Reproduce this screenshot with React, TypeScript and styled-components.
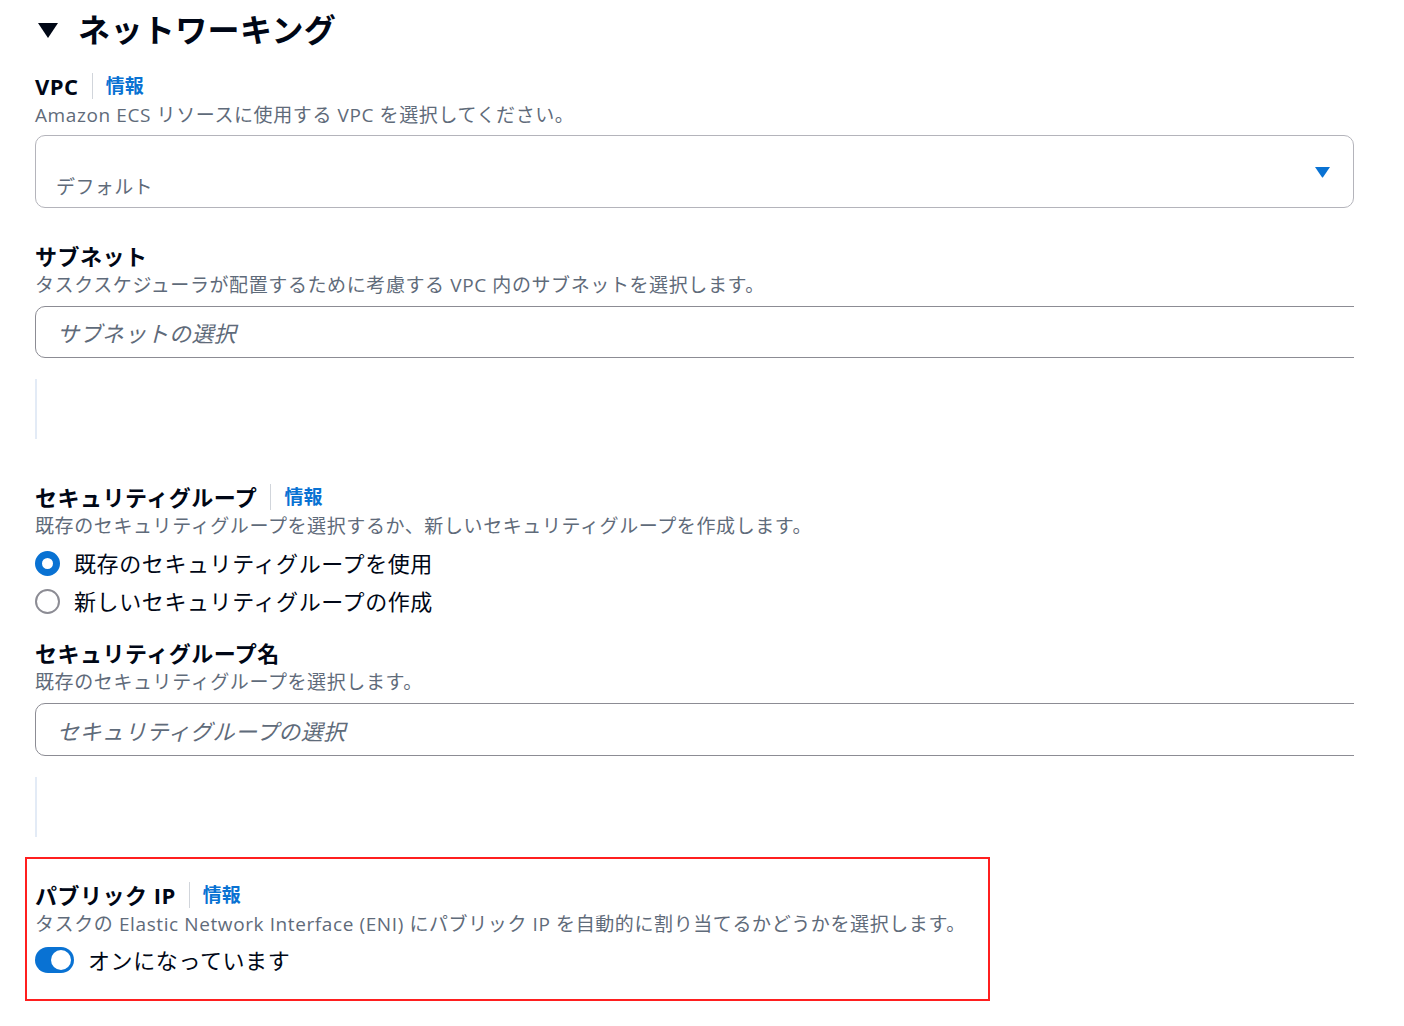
import React from 'react';
import styled, { createGlobalStyle } from 'styled-components';

const GlobalStyle = createGlobalStyle`
  body {
    margin: 0;
    background: #ffffff;
    font-family: 'Open Sans', 'Noto Sans CJK JP', sans-serif;
    color: #000716;
  }
`;

const Page = styled.div`
  padding: 10px 0 0 35px;
  width: 1319px;
`;

const Heading = styled.h2`
  display: flex;
  align-items: center;
  margin: 0;
  height: 40px;
  font-size: 32px;
  font-weight: 700;
  line-height: 40px;
  letter-spacing: 0.4px;
  svg {
    margin: 0 20px 0 3px;
  }
`;

const Field = styled.div<{ $top: number }>`
  margin-top: ${(p) => p.$top}px;
`;

const Label = styled.div`
  display: flex;
  align-items: center;
  height: 30px;
  font-size: 22px;
  font-weight: 700;
  line-height: 30px;
  letter-spacing: 0.5px;
`;

const Divider = styled.span`
  width: 1px;
  height: 26px;
  margin: 0 13px;
  background: #d1d5db;
`;

const InfoLink = styled.a`
  color: #0972d3;
  font-size: 19px;
  font-weight: 700;
  letter-spacing: 0;
  text-decoration: none;
`;

const Description = styled.div`
  font-size: 19px;
  line-height: 28px;
  letter-spacing: 0.6px;
  color: #5f6b7a;
`;

const Select = styled.div`
  display: flex;
  align-items: center;
  justify-content: space-between;
  box-sizing: border-box;
  height: 73px;
  margin-top: 6px;
  padding: 0 22px 0 20px;
  border: 1px solid #b4b4bb;
  border-radius: 10px;
`;

const SelectValue = styled.span`
  align-self: flex-end;
  padding-bottom: 6px;
  font-size: 19px;
  line-height: 28px;
  letter-spacing: 0.4px;
  color: #5f6b7a;
`;

const Clip = styled.div<{ $top: number }>`
  margin-top: ${(p) => p.$top}px;
  overflow: hidden;
`;

const Input = styled.div<{ $height: number }>`
  display: flex;
  align-items: center;
  box-sizing: border-box;
  width: calc(100% + 20px);
  height: ${(p) => p.$height}px;
  padding-left: 21px;
  border: 1px solid #8c8c94;
  border-radius: 10px;
  font-size: 22px;
  font-style: italic;
  letter-spacing: 0.4px;
  color: #5f6b7a;
`;

const TokenArea = styled.div`
  height: 60px;
  margin-top: 21px;
  border-left: 2px solid #e3ebf6;
`;

const RadioGroup = styled.div`
  display: flex;
  flex-direction: column;
  gap: 6px;
  margin-top: 7px;
`;

const RadioRow = styled.label`
  display: flex;
  align-items: center;
  gap: 14px;
  height: 32px;
  font-size: 22px;
  line-height: 32px;
  letter-spacing: 0.6px;
`;

const RadioDot = styled.span<{ $checked: boolean }>`
  box-sizing: border-box;
  width: 25px;
  height: 25px;
  border-radius: 50%;
  background: #ffffff;
  border: ${(p) => (p.$checked ? '7px solid #0972d3' : '2px solid #8c8c94')};
`;

const Highlight = styled.div`
  box-sizing: border-box;
  width: 965px;
  margin: 20px 0 0 -10px;
  padding: 21px 8px 23px;
  border: 2px solid #ff1f1f;
`;

const ToggleRow = styled.div`
  display: flex;
  align-items: center;
  gap: 14px;
  height: 32px;
  margin-top: 6px;
  font-size: 22px;
  line-height: 32px;
  letter-spacing: 0.6px;
`;

const Toggle = styled.span<{ $on: boolean }>`
  display: flex;
  align-items: center;
  justify-content: ${(p) => (p.$on ? 'flex-end' : 'flex-start')};
  box-sizing: border-box;
  width: 39px;
  height: 26px;
  padding: 0 3px;
  border-radius: 13px;
  background: ${(p) => (p.$on ? '#0972d3' : '#8c8c94')};
  &::after {
    content: '';
    width: 20px;
    height: 20px;
    border-radius: 50%;
    background: #ffffff;
  }
`;

const FieldLabel: React.FC<{ text: string; info?: boolean }> = ({ text, info }) => (
  <Label>
    {text}
    {info && (
      <>
        <Divider />
        <InfoLink href="#">情報</InfoLink>
      </>
    )}
  </Label>
);

const App: React.FC = () => {
  return (
    <>
      <GlobalStyle />
      <Page>
        <Heading>
          <svg width="20" height="15" viewBox="0 0 20 15">
            <polygon points="0,0 20,0 10,15" fill="#000716" />
          </svg>
          ネットワーキング
        </Heading>

        <Field $top={21}>
          <FieldLabel text="VPC" info />
          <Description>Amazon ECS リソースに使用する VPC を選択してください。</Description>
          <Select>
            <SelectValue>デフォルト</SelectValue>
            <svg width="17" height="12" viewBox="0 0 17 12">
              <path d="M1 1 L16 1 L9.2 11 Q8.5 12 7.8 11 Z" fill="#0972d3" />
            </svg>
          </Select>
        </Field>

        <Field $top={33}>
          <FieldLabel text="サブネット" />
          <Description>タスクスケジューラが配置するために考慮する VPC 内のサブネットを選択します。</Description>
          <Clip $top={7}>
            <Input $height={52}>サブネットの選択</Input>
          </Clip>
          <TokenArea />
        </Field>

        <Field $top={43}>
          <FieldLabel text="セキュリティグループ" info />
          <Description>既存のセキュリティグループを選択するか、新しいセキュリティグループを作成します。</Description>
          <RadioGroup>
            <RadioRow>
              <RadioDot $checked />
              既存のセキュリティグループを使用
            </RadioRow>
            <RadioRow>
              <RadioDot $checked={false} />
              新しいセキュリティグループの作成
            </RadioRow>
          </RadioGroup>
        </Field>

        <Field $top={21}>
          <FieldLabel text="セキュリティグループ名" />
          <Description>既存のセキュリティグループを選択します。</Description>
          <Clip $top={7}>
            <Input $height={53}>セキュリティグループの選択</Input>
          </Clip>
          <TokenArea />
        </Field>

        <Highlight>
          <FieldLabel text="パブリック IP" info />
          <Description>
            タスクの Elastic Network Interface (ENI) にパブリック IP を自動的に割り当てるかどうかを選択します。
          </Description>
          <ToggleRow>
            <Toggle $on />
            オンになっています
          </ToggleRow>
        </Highlight>
      </Page>
    </>
  );
};

export default App;
